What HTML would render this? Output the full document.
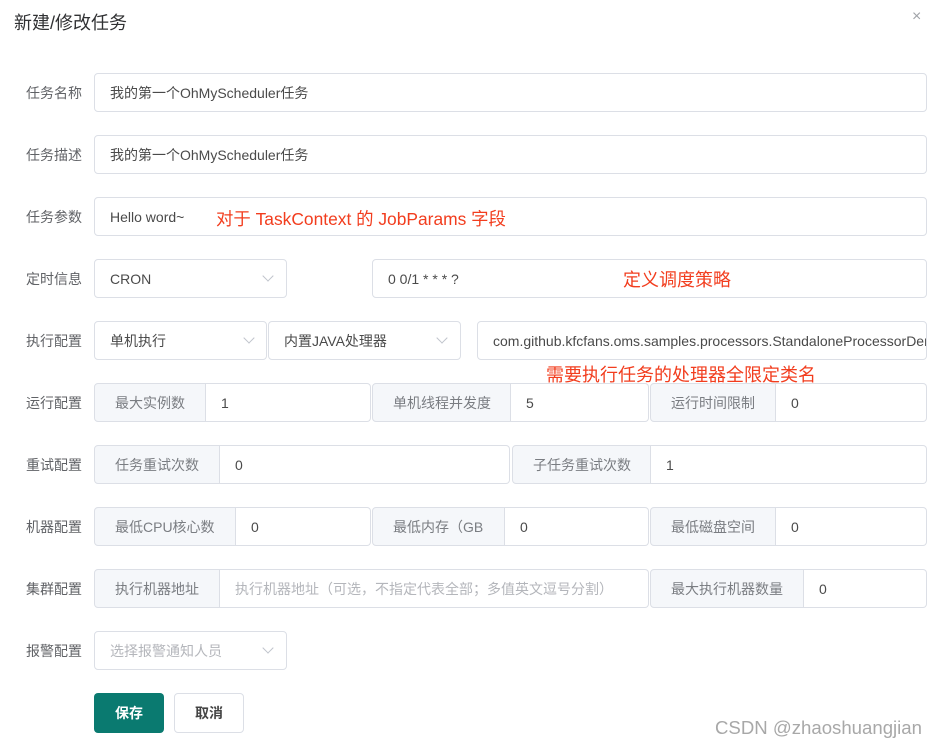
<!DOCTYPE html>
<html><head><meta charset="utf-8"><style>
*{box-sizing:border-box;margin:0;padding:0}
body{width:937px;height:748px;background:#fff;position:relative;overflow:hidden;font-family:"Liberation Sans","Noto Sans CJK SC",sans-serif;font-size:14px;color:#606266}
.a{position:absolute}
.lab{position:absolute;left:26px;width:60px;line-height:40px;font-size:14px;color:#606266}
.in{position:absolute;height:39px;border:1px solid #dcdfe6;border-radius:4px;line-height:39px;padding-left:15px;color:#4a4a4a;white-space:nowrap;overflow:hidden;background:#fff}
.pre{position:absolute;height:39px;border:1px solid #dcdfe6;border-radius:4px 0 0 4px;background:#f5f7fa;line-height:39px;padding-left:20px;color:#7a7d82;white-space:nowrap}
.pin{border-radius:0 4px 4px 0;border-left:none}
.ph{color:#b4b6bb}
.red{position:absolute;color:#f23d1e;font-size:18px;white-space:nowrap}
.arr{position:absolute;width:8px;height:8px;border-right:1px solid #c0c4cc;border-bottom:1px solid #c0c4cc;transform:rotate(45deg)}
</style></head><body>
<div class="a" style="left:14px;top:9px;font-size:18px;color:#303133">新建/修改任务</div>
<div class="a" style="left:912px;top:8px;font-size:16px;color:#a0a3a8">×</div>

<div class="lab" style="top:73px">任务名称</div>
<div class="in" style="left:94px;top:73px;width:833px">我的第一个OhMyScheduler任务</div>

<div class="lab" style="top:135px">任务描述</div>
<div class="in" style="left:94px;top:135px;width:833px">我的第一个OhMyScheduler任务</div>

<div class="lab" style="top:197px">任务参数</div>
<div class="in" style="left:94px;top:197px;width:833px">Hello word~</div>
<div class="red" style="left:216px;top:206px;font-size:17.4px">对于 TaskContext 的 JobParams 字段</div>

<div class="lab" style="top:259px">定时信息</div>
<div class="in" style="left:94px;top:259px;width:193px">CRON</div>
<div class="arr" style="left:264px;top:272px"></div>
<div class="in" style="left:372px;top:259px;width:555px">0 0/1 * * * ?</div>
<div class="red" style="left:623px;top:266px">定义调度策略</div>

<div class="lab" style="top:321px">执行配置</div>
<div class="in" style="left:94px;top:321px;width:173px">单机执行</div>
<div class="arr" style="left:245px;top:334px"></div>
<div class="in" style="left:268px;top:321px;width:193px">内置JAVA处理器</div>
<div class="arr" style="left:438px;top:334px"></div>
<div class="in" style="left:477px;top:321px;width:450px;padding-right:0">com.github.kfcfans.oms.samples.processors.StandaloneProcessorDemo</div>
<div class="red" style="left:546px;top:361px">需要执行任务的处理器全限定类名</div>

<div class="lab" style="top:383px">运行配置</div>
<div class="pre" style="left:94px;top:383px;width:112px">最大实例数</div>
<div class="in pin" style="left:206px;top:383px;width:165px">1</div>
<div class="pre" style="left:372px;top:383px;width:139px">单机线程并发度</div>
<div class="in pin" style="left:511px;top:383px;width:138px">5</div>
<div class="pre" style="left:650px;top:383px;width:126px">运行时间限制</div>
<div class="in pin" style="left:776px;top:383px;width:151px">0</div>

<div class="lab" style="top:445px">重试配置</div>
<div class="pre" style="left:94px;top:445px;width:126px">任务重试次数</div>
<div class="in pin" style="left:220px;top:445px;width:290px">0</div>
<div class="pre" style="left:512px;top:445px;width:139px">子任务重试次数</div>
<div class="in pin" style="left:651px;top:445px;width:276px">1</div>

<div class="lab" style="top:507px">机器配置</div>
<div class="pre" style="left:94px;top:507px;width:142px">最低CPU核心数</div>
<div class="in pin" style="left:236px;top:507px;width:135px">0</div>
<div class="pre" style="left:372px;top:507px;width:133px">最低内存（GB</div>
<div class="in pin" style="left:505px;top:507px;width:144px">0</div>
<div class="pre" style="left:650px;top:507px;width:126px">最低磁盘空间</div>
<div class="in pin" style="left:776px;top:507px;width:151px">0</div>

<div class="lab" style="top:569px">集群配置</div>
<div class="pre" style="left:94px;top:569px;width:126px">执行机器地址</div>
<div class="in pin ph" style="left:220px;top:569px;width:429px">执行机器地址（可选，不指定代表全部；多值英文逗号分割）</div>
<div class="pre" style="left:650px;top:569px;width:154px">最大执行机器数量</div>
<div class="in pin" style="left:804px;top:569px;width:123px">0</div>

<div class="lab" style="top:631px">报警配置</div>
<div class="in ph" style="left:94px;top:631px;width:193px">选择报警通知人员</div>
<div class="arr" style="left:264px;top:644px"></div>

<div class="a" style="left:94px;top:693px;width:70px;height:40px;background:#0a7a70;border-radius:4px;color:#fff;text-align:center;line-height:40px;font-weight:bold">保存</div>
<div class="a" style="left:174px;top:693px;width:70px;height:40px;border:1px solid #dcdfe6;border-radius:4px;color:#444;text-align:center;line-height:38px;font-weight:bold">取消</div>

<div class="a" style="left:715px;top:717px;font-size:18.6px;color:#a8a8a8">CSDN @zhaoshuangjian</div>
</body></html>
